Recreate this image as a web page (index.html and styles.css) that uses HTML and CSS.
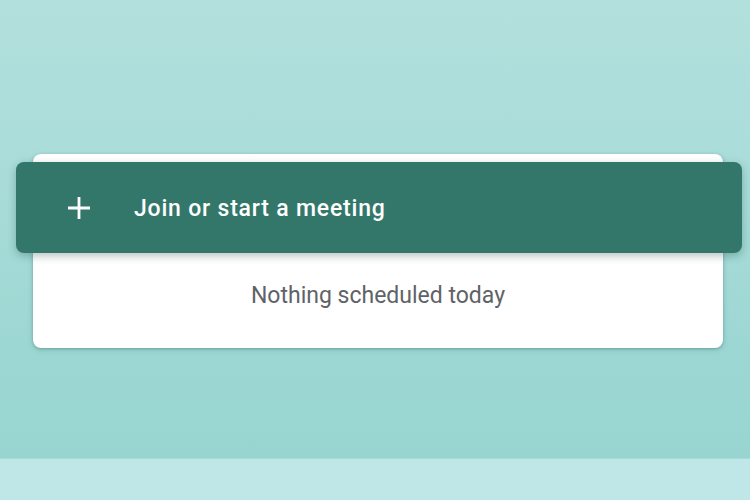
FILE: index.html
```html
<!DOCTYPE html>
<html>
<head>
<meta charset="utf-8">
<link rel="stylesheet" href="styles.css">
</head>
<body>
<div class="page">
  <main class="stage">
    <section class="card">
      <div class="join-bar">
        <svg class="plus" width="22" height="22" viewBox="0 0 22 22">
          <path d="M11 0v22M0 11h22" stroke="#fff" stroke-width="2.8" fill="none"/>
        </svg>
        <span class="join-text">Join or start a meeting</span>
      </div>
      <div class="empty">Nothing scheduled today</div>
    </section>
  </main>
  <footer class="band"></footer>
</div>
</body>
</html>
```
FILE: styles.css
```css
html, body {
  margin: 0;
  padding: 0;
}
body {
  font-family: Roboto, "Open Sans", "Liberation Sans", sans-serif;
}
.page {
  width: 750px;
  height: 500px;
  display: flex;
  flex-direction: column;
  overflow: hidden;
}
.stage {
  height: 459px;
  box-sizing: border-box;
  padding: 154px 0 0 33px;
  background: linear-gradient(180deg, #b2e0dd 0%, #a9dcd9 40%, #9dd7d3 75%, #98d5d1 100%);
  border-bottom: 1px solid #a3dbd8;
}
.band {
  flex: 1;
  background: #bfe7e7;
}
.card {
  width: 690px;
  height: 194px;
  box-sizing: border-box;
  padding-top: 8px;
  background: #fff;
  border-radius: 8px;
  box-shadow: 0 1px 3px rgba(40, 90, 85, 0.35), 0 2px 6px rgba(40, 90, 85, 0.15);
  display: flex;
  flex-direction: column;
}
.join-bar {
  height: 91px;
  margin: 0 -19px 0 -17px;
  background: #32776a;
  border-radius: 8px;
  box-shadow: 0 3px 8px rgba(20, 60, 55, 0.3);
  display: flex;
  align-items: center;
  padding-left: 52px;
}
.plus {
  display: block;
  flex: none;
}
.join-text {
  margin-left: 44px;
  color: #fff;
  font-size: 23px;
  font-weight: 500;
  letter-spacing: 0.8px;
  line-height: 1;
  padding-top: 1px;
}
.empty {
  flex: 1;
  display: flex;
  align-items: center;
  justify-content: center;
  padding-bottom: 10px;
  color: #5f6368;
  font-size: 23px;
}
```
